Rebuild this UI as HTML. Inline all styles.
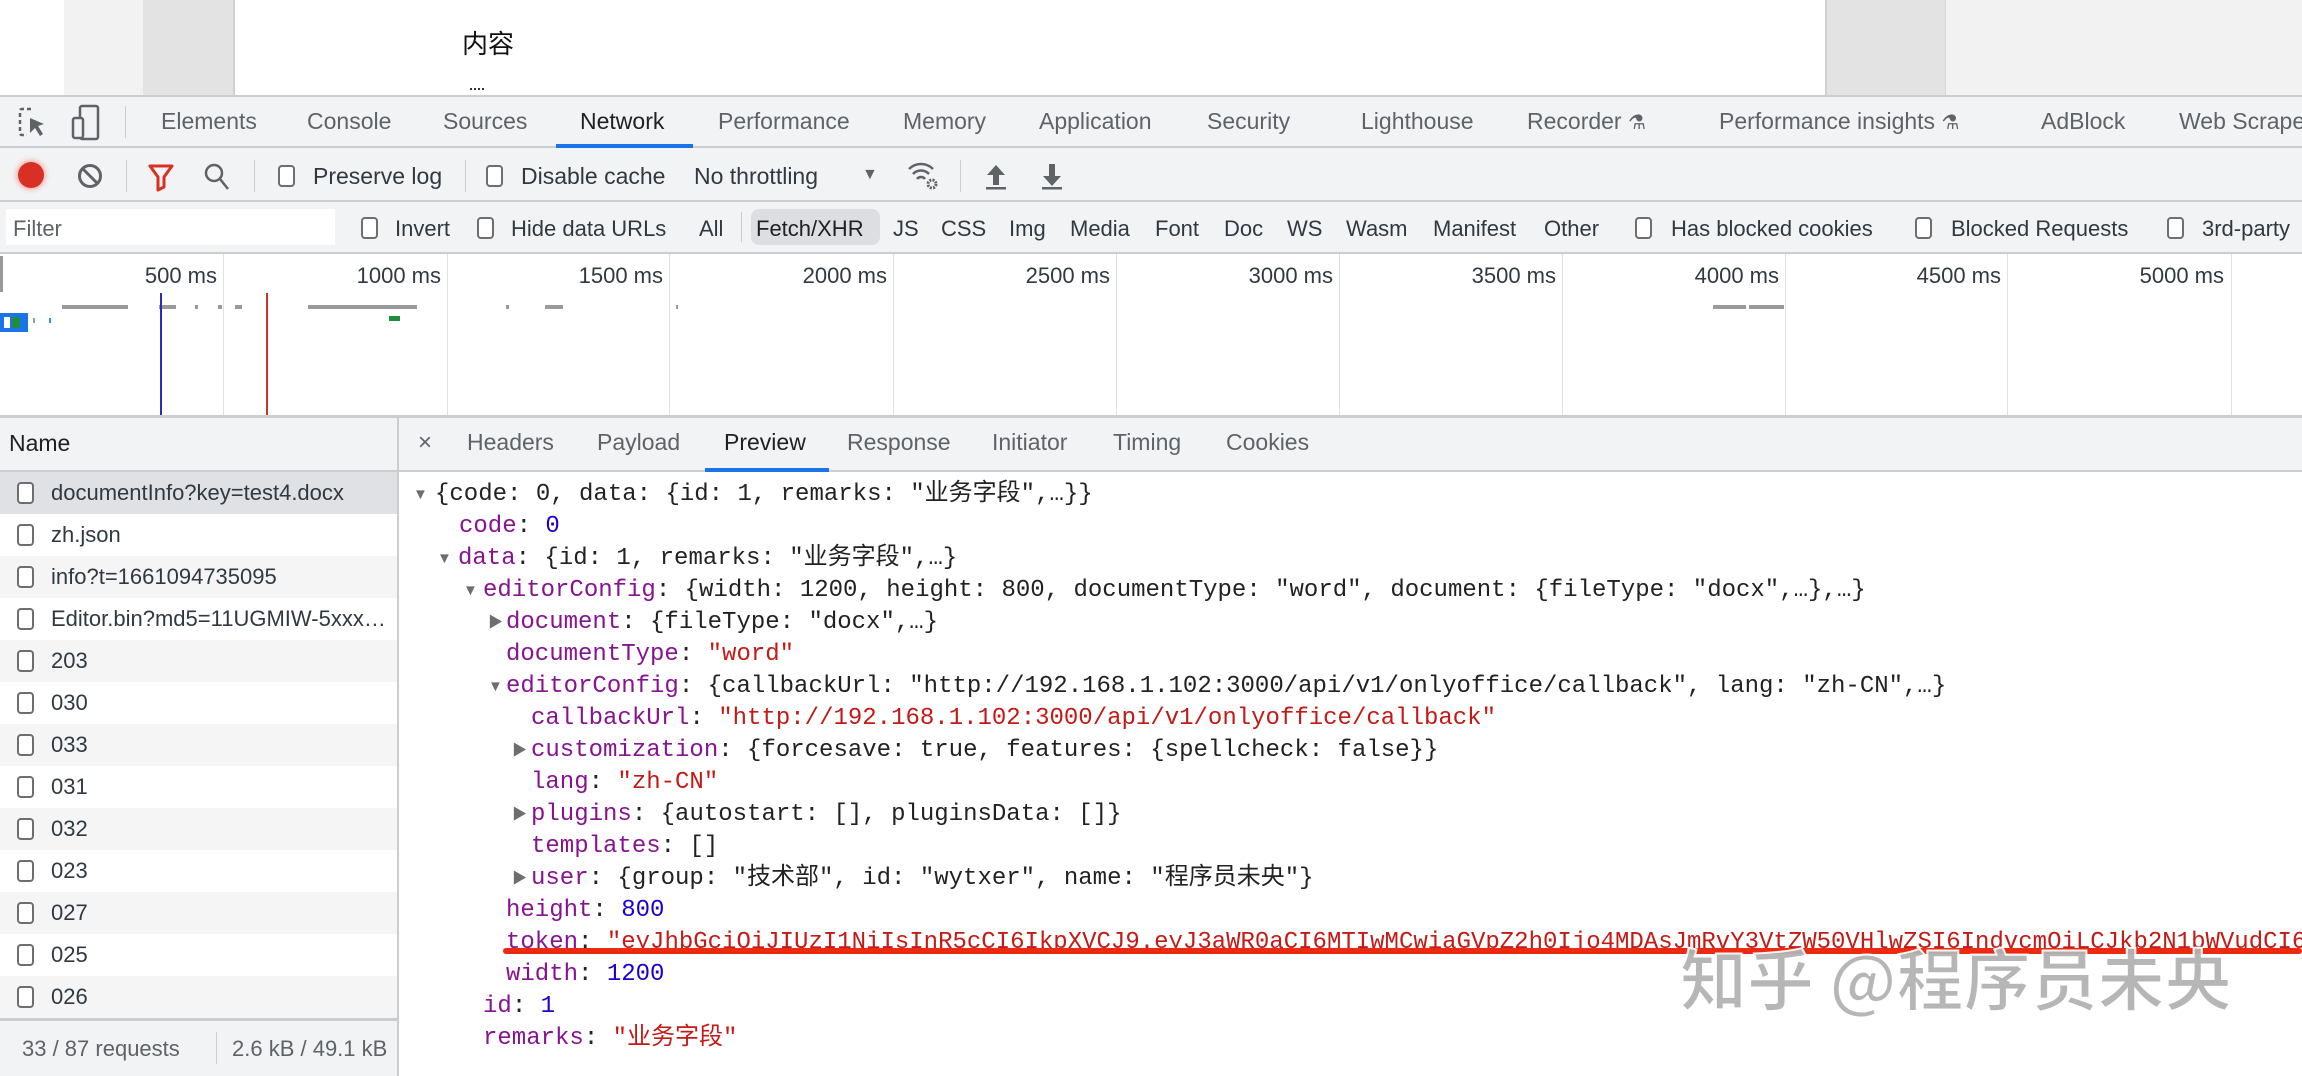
<!DOCTYPE html>
<html><head><meta charset="utf-8">
<style>
*{box-sizing:border-box;margin:0;padding:0}
body{width:2302px;height:1076px;overflow:hidden;background:#fff;position:relative;font-family:"Liberation Sans","Noto Sans CJK SC",sans-serif;color:#303942}
.a{position:absolute;white-space:nowrap}
.t{font-size:23px;color:#5f6368;top:108px}
.r2{font-size:23px;color:#303942;top:163px}
.r3{font-size:22px;color:#303942;top:216px}
.cb{position:absolute;width:17px;height:22px;border:2px solid #6e6e6e;border-radius:4px;background:#fff}
.tl{font-size:22px;color:#303942;top:263px}
.gl{position:absolute;top:254px;width:1px;height:161px;background:#e0e0e0}
.bar{position:absolute;height:4px;background:#9a9a9a;top:305px}
.row{position:absolute;left:0;width:397px;height:42px;font-size:22px;color:#303942}
.row .cb{left:17px;top:10px}
.row span{position:absolute;left:51px;top:8px;width:340px;overflow:hidden;text-overflow:ellipsis;white-space:nowrap}
.j{position:absolute;font-family:"Liberation Mono","Noto Sans CJK SC",monospace;font-size:24px;line-height:32px;color:#222;white-space:nowrap}
.k{color:#881391}.s{color:#c41a16}.n{color:#1c00cf}
.tri{position:absolute;font-size:15px;color:#6e6e6e;line-height:32px}
.rt{font-size:23px;color:#5f6368;top:429px}
</style></head><body>
<div class="a" style="left:64px;top:0;width:79px;height:96px;background:#f2f2f2"></div>
<div class="a" style="left:143px;top:0;width:92px;height:96px;background:#e3e3e3;border-right:2px solid #d0d0d0"></div>
<div class="a" style="left:1825px;top:0;width:120px;height:96px;background:#e3e3e3;border-left:2px solid #d0d0d0"></div>
<div class="a" style="left:1945px;top:0;width:357px;height:96px;background:#f2f2f2;border-left:1px solid #d8d8d8"></div>
<div class="a" style="left:462px;top:24px;font-size:26px;color:#111">内容</div>
<div class="a" style="left:470px;top:88px;width:14px;height:3px;border-top:2px dotted #333"></div>
<div class="a" style="left:0;top:95px;width:2302px;height:53px;background:#f1f3f4;border-top:2px solid #cbcdd1;border-bottom:2px solid #cbcdd1"></div>
<svg class="a" style="left:18px;top:106px" width="30" height="34" viewBox="0 0 30 34"><path d="M13 3H4a2 2 0 0 0-2 2v22a2 2 0 0 0 2 2h5" fill="none" stroke="#5f6368" stroke-width="2.5" stroke-dasharray="4 3"/><path d="M12 12l14 6-6 2 5 8-3 2-5-8-5 5z" fill="#5f6368"/></svg>
<svg class="a" style="left:70px;top:104px" width="32" height="38" viewBox="0 0 32 38"><rect x="10" y="2" width="18" height="33" rx="2" fill="none" stroke="#5f6368" stroke-width="2.5"/><rect x="3" y="14" width="10" height="20" rx="2" fill="#f1f3f4" stroke="#5f6368" stroke-width="2.5"/></svg>
<div class="a" style="left:125px;top:106px;width:1px;height:32px;background:#cbcdd1"></div>
<div class="a t" style="left:161px">Elements</div>
<div class="a t" style="left:307px">Console</div>
<div class="a t" style="left:443px">Sources</div>
<div class="a t" style="left:580px;color:#202124">Network</div>
<div class="a" style="left:556px;top:144px;width:137px;height:4px;background:#1a73e8"></div>
<div class="a t" style="left:718px">Performance</div>
<div class="a t" style="left:903px">Memory</div>
<div class="a t" style="left:1039px">Application</div>
<div class="a t" style="left:1207px">Security</div>
<div class="a t" style="left:1361px">Lighthouse</div>
<div class="a t" style="left:1527px">Recorder <span style="font-size:20px">⚗</span></div>
<div class="a t" style="left:1719px">Performance insights <span style="font-size:20px">⚗</span></div>
<div class="a t" style="left:2041px">AdBlock</div>
<div class="a t" style="left:2179px">Web Scraper</div>
<div class="a" style="left:0;top:148px;width:2302px;height:54px;background:#f1f3f4;border-bottom:2px solid #cbcdd1"></div>
<div class="a" style="left:18px;top:162px;width:26px;height:26px;border-radius:50%;background:#d93025;box-shadow:0 0 5px 2px #f4b4ae"></div>
<svg class="a" style="left:76px;top:162px" width="28" height="28" viewBox="0 0 28 28"><circle cx="14" cy="14" r="10.5" fill="none" stroke="#5f6368" stroke-width="3"/><path d="M7 7l14 14" stroke="#5f6368" stroke-width="3"/></svg>
<div class="a" style="left:126px;top:160px;width:1px;height:32px;background:#cbcdd1"></div>
<svg class="a" style="left:147px;top:162px" width="28" height="30" viewBox="0 0 28 30"><path d="M3 4h22l-8 11v10l-6 3V15z" fill="none" stroke="#d93025" stroke-width="3" stroke-linejoin="round"/></svg>
<svg class="a" style="left:202px;top:161px" width="30" height="32" viewBox="0 0 30 32"><circle cx="12" cy="12" r="8" fill="none" stroke="#5f6368" stroke-width="2.5"/><path d="M18 18l8 10" stroke="#5f6368" stroke-width="2.5"/></svg>
<div class="a" style="left:254px;top:160px;width:1px;height:32px;background:#cbcdd1"></div>
<div class="cb" style="left:278px;top:165px"></div><div class="a r2" style="left:313px">Preserve log</div>
<div class="a" style="left:465px;top:160px;width:1px;height:32px;background:#cbcdd1"></div>
<div class="cb" style="left:486px;top:165px"></div><div class="a r2" style="left:521px">Disable cache</div>
<div class="a r2" style="left:694px">No throttling</div>
<div class="a" style="left:862px;top:166px;font-size:16px;color:#5f6368">▼</div>
<svg class="a" style="left:906px;top:160px" width="34" height="32" viewBox="0 0 34 32"><path d="M3 9a17 17 0 0 1 24 0M7 14a11 11 0 0 1 16 0M11 19a5 5 0 0 1 8 0" fill="none" stroke="#5f6368" stroke-width="2.5"/><circle cx="26" cy="24" r="4" fill="none" stroke="#5f6368" stroke-width="3" stroke-dasharray="2 1.2"/></svg>
<div class="a" style="left:960px;top:160px;width:1px;height:32px;background:#cbcdd1"></div>
<svg class="a" style="left:984px;top:162px" width="24" height="28" viewBox="0 0 24 28"><path d="M12 3l9 10h-6v10H9V13H3z" fill="#5f6368"/><rect x="2" y="25" width="20" height="2.5" fill="#5f6368"/></svg>
<svg class="a" style="left:1040px;top:162px" width="24" height="28" viewBox="0 0 24 28"><path d="M12 24l9-10h-6V2H9v12H3z" fill="#5f6368"/><rect x="2" y="25" width="20" height="2.5" fill="#5f6368"/></svg>
<div class="a" style="left:0;top:202px;width:2302px;height:52px;background:#f1f3f4;border-bottom:2px solid #cbcdd1"></div>
<div class="a" style="left:6px;top:209px;width:329px;height:36px;background:#fff"></div>
<div class="a r3" style="left:13px;color:#5f6368">Filter</div>
<div class="cb" style="left:361px;top:217px"></div><div class="a r3" style="left:395px">Invert</div>
<div class="cb" style="left:477px;top:217px"></div><div class="a r3" style="left:511px">Hide data URLs</div>
<div class="a r3" style="left:699px">All</div>
<div class="a" style="left:741px;top:212px;width:1px;height:30px;background:#cbcdd1"></div>
<div class="a" style="left:751px;top:209px;width:129px;height:36px;background:#dcdee1;border-radius:8px"></div>
<div class="a r3" style="left:756px;color:#202124">Fetch/XHR</div>
<div class="a r3" style="left:893px">JS</div>
<div class="a r3" style="left:941px">CSS</div>
<div class="a r3" style="left:1009px">Img</div>
<div class="a r3" style="left:1070px">Media</div>
<div class="a r3" style="left:1155px">Font</div>
<div class="a r3" style="left:1224px">Doc</div>
<div class="a r3" style="left:1287px">WS</div>
<div class="a r3" style="left:1346px">Wasm</div>
<div class="a r3" style="left:1433px">Manifest</div>
<div class="a r3" style="left:1544px">Other</div>
<div class="cb" style="left:1635px;top:217px"></div><div class="a r3" style="left:1671px">Has blocked cookies</div>
<div class="cb" style="left:1915px;top:217px"></div><div class="a r3" style="left:1951px">Blocked Requests</div>
<div class="cb" style="left:2167px;top:217px"></div><div class="a r3" style="left:2202px">3rd-party</div>
<div class="a" style="left:0;top:256px;width:3px;height:36px;background:#999"></div>
<div class="gl" style="left:223px"></div><div class="gl" style="left:447px"></div><div class="gl" style="left:669px"></div><div class="gl" style="left:893px"></div><div class="gl" style="left:1116px"></div><div class="gl" style="left:1339px"></div><div class="gl" style="left:1562px"></div><div class="gl" style="left:1785px"></div><div class="gl" style="left:2007px"></div><div class="gl" style="left:2231px"></div>
<div class="a tl" style="right:2085px">500 ms</div>
<div class="a tl" style="right:1861px">1000 ms</div>
<div class="a tl" style="right:1639px">1500 ms</div>
<div class="a tl" style="right:1415px">2000 ms</div>
<div class="a tl" style="right:1192px">2500 ms</div>
<div class="a tl" style="right:969px">3000 ms</div>
<div class="a tl" style="right:746px">3500 ms</div>
<div class="a tl" style="right:523px">4000 ms</div>
<div class="a tl" style="right:301px">4500 ms</div>
<div class="a tl" style="right:78px">5000 ms</div>
<div class="bar" style="left:62px;width:66px"></div>
<div class="bar" style="left:159px;width:17px"></div>
<div class="bar" style="left:195px;width:3px"></div>
<div class="bar" style="left:218px;width:4px"></div>
<div class="bar" style="left:235px;width:7px"></div>
<div class="bar" style="left:308px;width:109px"></div>
<div class="bar" style="left:506px;width:3px"></div>
<div class="bar" style="left:545px;width:18px"></div>
<div class="bar" style="left:676px;width:2px"></div>
<div class="bar" style="left:1713px;width:33px"></div>
<div class="bar" style="left:1749px;width:35px"></div>
<div class="a" style="left:160px;top:293px;width:2px;height:122px;background:#2b2bb5"></div>
<div class="a" style="left:266px;top:293px;width:2px;height:122px;background:#c0392b"></div>
<div class="a" style="left:0;top:313px;width:28px;height:19px;background:#1a73e8"></div>
<div class="a" style="left:4px;top:317px;width:6px;height:11px;background:#fff"></div>
<div class="a" style="left:12px;top:317px;width:8px;height:11px;background:#1e8e3e"></div>
<div class="a" style="left:33px;top:318px;width:18px;height:5px;border-left:2px solid #7ab;border-right:2px solid #39c"></div>
<div class="a" style="left:389px;top:316px;width:11px;height:5px;background:#1e8e3e"></div>
<div class="a" style="left:0;top:415px;width:2302px;height:3px;background:#cbcdd1"></div>
<div class="a" style="left:0;top:418px;width:398px;height:54px;background:#f1f3f4;border-bottom:2px solid #cbcdd1"></div>
<div class="a" style="left:9px;top:430px;font-size:23px;color:#202124">Name</div>
<div class="row" style="top:472px;background:#dfe1e5"><div class="cb"></div><span>documentInfo?key=test4.docx</span></div>
<div class="row" style="top:514px;background:#fff"><div class="cb"></div><span>zh.json</span></div>
<div class="row" style="top:556px;background:#f5f5f5"><div class="cb"></div><span>info?t=1661094735095</span></div>
<div class="row" style="top:598px;background:#fff"><div class="cb"></div><span>Editor.bin?md5=11UGMIW-5xxxxxx</span></div>
<div class="row" style="top:640px;background:#f5f5f5"><div class="cb"></div><span>203</span></div>
<div class="row" style="top:682px;background:#fff"><div class="cb"></div><span>030</span></div>
<div class="row" style="top:724px;background:#f5f5f5"><div class="cb"></div><span>033</span></div>
<div class="row" style="top:766px;background:#fff"><div class="cb"></div><span>031</span></div>
<div class="row" style="top:808px;background:#f5f5f5"><div class="cb"></div><span>032</span></div>
<div class="row" style="top:850px;background:#fff"><div class="cb"></div><span>023</span></div>
<div class="row" style="top:892px;background:#f5f5f5"><div class="cb"></div><span>027</span></div>
<div class="row" style="top:934px;background:#fff"><div class="cb"></div><span>025</span></div>
<div class="row" style="top:976px;background:#f5f5f5"><div class="cb"></div><span>026</span></div>
<div class="a" style="left:0;top:1018px;width:398px;height:58px;background:#f1f3f4;border-top:3px solid #cbcdd1"></div>
<div class="a" style="left:22px;top:1036px;font-size:22px;color:#5f6368">33 / 87 requests</div>
<div class="a" style="left:216px;top:1032px;width:1px;height:32px;background:#cbcdd1"></div>
<div class="a" style="left:232px;top:1036px;font-size:22px;color:#5f6368;width:160px;overflow:hidden">2.6 kB / 49.1 kB</div>
<div class="a" style="left:397px;top:418px;width:2px;height:658px;background:#cbcdd1"></div>
<div class="a" style="left:399px;top:418px;width:1903px;height:54px;background:#f1f3f4;border-bottom:2px solid #cbcdd1"></div>
<div class="a rt" style="left:418px;font-size:24px">×</div>
<div class="a rt" style="left:467px">Headers</div>
<div class="a rt" style="left:597px">Payload</div>
<div class="a rt" style="left:724px;color:#202124">Preview</div>
<div class="a" style="left:705px;top:468px;width:124px;height:4px;background:#1a73e8"></div>
<div class="a rt" style="left:847px">Response</div>
<div class="a rt" style="left:992px">Initiator</div>
<div class="a rt" style="left:1113px">Timing</div>
<div class="a rt" style="left:1226px">Cookies</div>
<div class="tri" style="left:413px;top:479px">▼</div><div class="j" style="left:435px;top:479px">{code: 0, data: {id: 1, remarks: "业务字段",…}}</div>
<div class="j" style="left:459px;top:511px"><span class="k">code</span>: <span class="n">0</span></div>
<div class="tri" style="left:437px;top:543px">▼</div><div class="j" style="left:458px;top:543px"><span class="k">data</span>: {id: 1, remarks: "业务字段",…}</div>
<div class="tri" style="left:463px;top:575px">▼</div><div class="j" style="left:483px;top:575px"><span class="k">editorConfig</span>: {width: 1200, height: 800, documentType: "word", document: {fileType: "docx",…},…}</div>
<div class="tri" style="left:488px;top:607px">▶</div><div class="j" style="left:506px;top:607px"><span class="k">document</span>: {fileType: "docx",…}</div>
<div class="j" style="left:506px;top:639px"><span class="k">documentType</span>: <span class="s">"word"</span></div>
<div class="tri" style="left:488px;top:671px">▼</div><div class="j" style="left:506px;top:671px"><span class="k">editorConfig</span>: {callbackUrl: "http://192.168.1.102:3000/api/v1/onlyoffice/callback", lang: "zh-CN",…}</div>
<div class="j" style="left:531px;top:703px"><span class="k">callbackUrl</span>: <span class="s">"http://192.168.1.102:3000/api/v1/onlyoffice/callback"</span></div>
<div class="tri" style="left:512px;top:735px">▶</div><div class="j" style="left:531px;top:735px"><span class="k">customization</span>: {forcesave: true, features: {spellcheck: false}}</div>
<div class="j" style="left:531px;top:767px"><span class="k">lang</span>: <span class="s">"zh-CN"</span></div>
<div class="tri" style="left:512px;top:799px">▶</div><div class="j" style="left:531px;top:799px"><span class="k">plugins</span>: {autostart: [], pluginsData: []}</div>
<div class="j" style="left:531px;top:831px"><span class="k">templates</span>: []</div>
<div class="tri" style="left:512px;top:863px">▶</div><div class="j" style="left:531px;top:863px"><span class="k">user</span>: {group: "技术部", id: "wytxer", name: "程序员未央"}</div>
<div class="j" style="left:506px;top:895px"><span class="k">height</span>: <span class="n">800</span></div>
<div class="j" style="left:506px;top:927px;width:1796px;overflow:hidden"><span class="k">token</span>: <span class="s">"eyJhbGciOiJIUzI1NiIsInR5cCI6IkpXVCJ9.eyJ3aWR0aCI6MTIwMCwiaGVpZ2h0Ijo4MDAsJmRvY3VtZW50VHlwZSI6IndvcmQiLCJkb2N1bWVudCI6eyJmaWxlVHlwZSI6ImRvY3gi</span></div>
<div class="a" style="left:503px;top:948px;width:1799px;height:6px;background:#ec2a12;border-radius:3px"></div>
<div class="j" style="left:506px;top:959px"><span class="k">width</span>: <span class="n">1200</span></div>
<div class="j" style="left:483px;top:991px"><span class="k">id</span>: <span class="n">1</span></div>
<div class="j" style="left:483px;top:1023px"><span class="k">remarks</span>: <span class="s">"业务字段"</span></div>
<div class="a" style="left:1680px;top:928px;font-size:67px;font-family:'Noto Sans CJK SC',sans-serif;color:#b3b3b3;-webkit-text-stroke:2px #fff;font-weight:bold;opacity:.95">知乎 @程序员未央</div>
</body></html>
